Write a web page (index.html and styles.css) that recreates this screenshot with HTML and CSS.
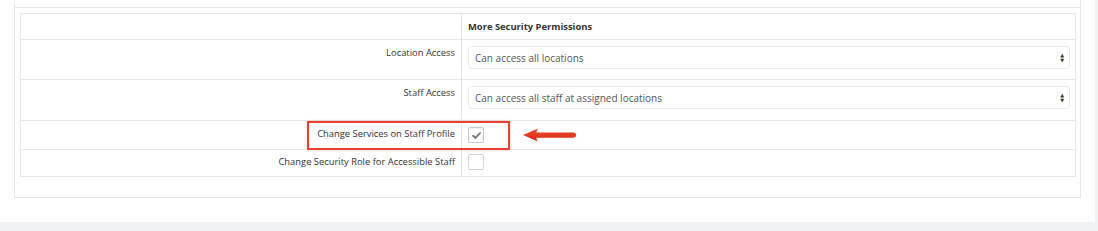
FILE: index.html
```html
<!DOCTYPE html>
<html>
<head>
<meta charset="utf-8">
<link rel="stylesheet" href="styles.css">
</head>
<body>
<div class="page">
  <div class="panel">
    <div class="divider"></div>
    <table class="perm">
      <tr class="r-head">
        <td class="lab"></td>
        <td class="val head">More Security Permissions</td>
      </tr>
      <tr class="r-sel1">
        <td class="lab">Location Access</td>
        <td class="val"><div class="select"><span>Can access all locations</span><span class="caret">&#9650;<br>&#9660;</span></div></td>
      </tr>
      <tr class="r-sel2">
        <td class="lab">Staff Access</td>
        <td class="val"><div class="select"><span>Can access all staff at assigned locations</span><span class="caret">&#9650;<br>&#9660;</span></div></td>
      </tr>
      <tr class="r-chk1">
        <td class="lab">Change Services on Staff Profile</td>
        <td class="val"><div class="check checked"><svg width="9" height="7" viewBox="0 0 9 7"><path d="M1 3.8 L3.4 6 L8 1.2" fill="none" stroke="#7a7a7a" stroke-width="1.9" stroke-linecap="round" stroke-linejoin="round"/></svg></div></td>
      </tr>
      <tr class="r-chk2">
        <td class="lab">Change Security Role for Accessible Staff</td>
        <td class="val"><div class="check"></div></td>
      </tr>
    </table>
  </div>
  <div class="highlight"></div>
  <svg class="arrow" width="56" height="18" viewBox="0 0 56 18">
    <defs>
      <linearGradient id="ag" x1="0" y1="0" x2="0" y2="1">
        <stop offset="0" stop-color="#f24a2f"/>
        <stop offset="1" stop-color="#d22814"/>
      </linearGradient>
    </defs>
    <path d="M1 9 L16 2.5 Q13.5 6.5 15 6.6 L51 6.6 Q54 6.6 54 9 Q54 11.8 51 11.8 L15 11.8 Q13.5 12 16 15.5 Z" fill="url(#ag)"/>
  </svg>
</div>
</body>
</html>
```
FILE: styles.css
```css
html, body {
  margin: 0;
  padding: 0;
}
body {
  background: #f0f3f6;
  font-family: "Open Sans", "DejaVu Sans", sans-serif;
  font-size: 9.4px;
  color: #333;
}
.page {
  position: relative;
  width: 1095px;
  height: 222px;
  background: #fff;
}
.panel {
  margin-left: 14px;
  width: 1067px;
  height: 198px;
  box-sizing: border-box;
  border: 1px solid #e6e6e6;
  border-top: none;
}
.divider {
  height: 7px;
  border-bottom: 1px solid #e6e6e6;
}
.perm {
  margin: 5px 0 0 5px;
  width: 1056px;
  border-collapse: collapse;
}
.perm td {
  box-sizing: border-box;
  border: 1px solid #e8e8e8;
  padding: 0;
  vertical-align: top;
}
.perm td.lab {
  width: 441px;
  text-align: right;
  padding: 5px 6px 0 0;
  line-height: 15px;
}
.perm td.val {
  padding: 6px 5px 0 6px;
}
.perm td.head {
  font-weight: bold;
  vertical-align: middle;
  padding-top: 0;
  color: #333;
}
.r-head td { height: 26px; }
.r-sel1 td { height: 40px; }
.r-sel2 td { height: 41px; }
.r-chk1 td { height: 29px; }
.r-chk2 td { height: 27px; }
.r-chk2 td.val { padding-top: 4px; }
.r-chk2 td.lab { padding-top: 4px; }
.select {
  display: flex;
  align-items: center;
  justify-content: space-between;
  height: 23px;
  box-sizing: border-box;
  border: 1px solid #ececec;
  border-radius: 3px;
  padding: 0 5px 0 6px;
  color: #555;
  font-size: 10px;
}
.caret {
  font-size: 5px;
  line-height: 5px;
  color: #333;
  text-align: center;
}
.check {
  display: flex;
  align-items: center;
  justify-content: center;
  width: 16px;
  height: 16px;
  box-sizing: border-box;
  border: 1px solid #d6d6d6;
  border-radius: 2px;
  background: #fff;
}
.check.checked {
  border-color: #c9c9c9;
  box-shadow: inset 0 1px 1px rgba(0,0,0,0.06);
}
.highlight {
  position: absolute;
  left: 307px;
  top: 121px;
  width: 203px;
  height: 29px;
  box-sizing: border-box;
  border: 2px solid #e8412f;
  box-shadow: 0 0 2px rgba(232,65,47,0.35);
}
.arrow {
  position: absolute;
  left: 522px;
  top: 126px;
}
```
